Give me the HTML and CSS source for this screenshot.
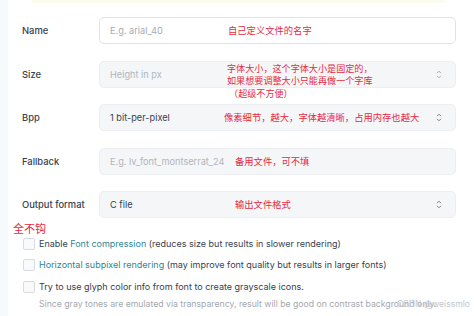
FILE: index.html
```html
<!DOCTYPE html>
<html lang="en">
<head>
    <meta charset="UTF-8">
    <meta name="viewport" content="width=device-width, initial-scale=1.0">
    <title>Font converter settings</title>
    <link rel="stylesheet" href="styles.css">
</head>
<body>

    <div class="top-strip"></div>

    <!-- Settings form -->
    <form class="form">
        <div class="row">
            <label class="label" for="name">Name</label>
            <div class="field">
                <input class="control" id="name" type="text" placeholder="E.g. arial_40">
                <span class="note note-name">自己定义文件的名字</span>
            </div>
        </div>

        <div class="row">
            <label class="label" for="size">Size</label>
            <div class="field">
                <div class="control control-grey">
                    <span class="placeholder">Height in px</span>
                    <svg class="spin" width="6" height="9" viewBox="0 0 6 9"><path d="M1 3.2 3 1.2 5 3.2M1 5.8 3 7.8 5 5.8" fill="none" stroke="#9ca3af" stroke-width="0.9"/></svg>
                </div>
                <span class="note note-size">字体大小，这个字体大小是固定的，<br>如果想要调整大小只能再做一个字库<br>&nbsp;（超级不方便）</span>
            </div>
        </div>

        <div class="row">
            <label class="label" for="bpp">Bpp</label>
            <div class="field">
                <div class="control control-grey" id="bpp">
                    <span class="value">1 bit-per-pixel</span>
                    <svg class="spin" width="6" height="9" viewBox="0 0 6 9"><path d="M1 3.2 3 1.2 5 3.2M1 5.8 3 7.8 5 5.8" fill="none" stroke="#6b7280" stroke-width="0.9"/></svg>
                </div>
                <span class="note note-bpp">像素细节，越大，字体越清晰，占用内存也越大</span>
            </div>
        </div>

        <div class="row">
            <label class="label" for="fallback">Fallback</label>
            <div class="field">
                <div class="control control-grey" id="fallback">
                    <span class="placeholder">E.g. lv_font_montserrat_24</span>
                </div>
                <span class="note note-fallback">备用文件，可不填</span>
            </div>
        </div>

        <div class="row">
            <label class="label" for="format">Output format</label>
            <div class="field">
                <div class="control control-grey" id="format">
                    <span class="value">C file</span>
                    <svg class="spin" width="6" height="9" viewBox="0 0 6 9"><path d="M1 3.2 3 1.2 5 3.2M1 5.8 3 7.8 5 5.8" fill="none" stroke="#6b7280" stroke-width="0.9"/></svg>
                </div>
                <span class="note note-format">输出文件格式</span>
            </div>
        </div>

        <!-- Options -->
        <div class="checks">
            <div class="note-all">全不钩</div>
            <label class="check">
                <span class="box"></span>
                <span>Enable <span class="link">Font compression</span> (reduces size but results in slower rendering)</span>
            </label>
            <label class="check">
                <span class="box"></span>
                <span><span class="link">Horizontal subpixel rendering</span> (may improve font quality but results in larger fonts)</span>
            </label>
            <label class="check">
                <span class="box"></span>
                <span>Try to use glyph color info from font to create grayscale icons.</span>
            </label>
            <div class="hint">Since gray tones are emulated via transparency, result will be good on contrast background only.</div>
        </div>
    </form>

    <div class="watermark">CSDN @weissmlo</div>

</body>
</html>
```

FILE: styles.css
```css
body {
    margin: 0;
    background-color: #ffffff;
    font-family: Inter, "Noto Sans", "Noto Sans CJK SC", sans-serif;
    color: #374151;
    border-left: 8px solid #f5fafb;
    height: 316px;
    box-sizing: border-box;
    overflow: hidden;
    position: relative;
}

.top-strip {
    height: 3px;
    margin: 0 29px 0 24px;
    background-color: #fbfbee;
}

/* --- Form rows --- */
.form {
    padding: 14px 0 0 14px;
}

.row {
    display: grid;
    grid-template-columns: 77px 357px;
    align-items: center;
    height: 27px;
    margin-bottom: 16.5px;
}

.label {
    font-size: 9.4px;
    font-weight: 500;
    color: #374151;
}

.field {
    position: relative;
    height: 27px;
}

.control {
    box-sizing: border-box;
    width: 100%;
    height: 27px;
    margin: 0;
    padding: 0 13px 0 10px;
    border: 1px solid #e1e3e7;
    border-radius: 5px;
    background-color: #ffffff;
    font-family: inherit;
    font-size: 9.2px;
    color: #374151;
    display: flex;
    align-items: center;
    justify-content: space-between;
    outline: none;
}
.control::placeholder { color: #a5abb5; }

.control-grey {
    background-color: #f5f6f8;
    border-color: #eceef1;
}

.placeholder { color: #b0b5bd; }
.value { color: #374151; }

.spin { flex: none; }

/* Red annotations drawn over the inputs */
.note {
    position: absolute;
    font-family: "Noto Sans CJK SC", sans-serif;
    font-size: 9.3px;
    color: #e52a3f;
    line-height: 12.5px;
    white-space: nowrap;
}
.note-name { left: 129px; top: 7px; }
.note-size { left: 128px; top: 1px; font-size: 9.1px; }
.note-bpp { left: 125px; top: 7px; }
.note-fallback { left: 136px; top: 7px; }
.note-format { left: 136px; top: 7px; }

/* --- Checkboxes --- */
.checks {
    margin: -13px 0 0 -9px;
}

.note-all {
    font-family: "Noto Sans CJK SC", sans-serif;
    font-size: 11px;
    line-height: 12px;
    color: #e52a3f;
}

.check {
    display: flex;
    align-items: center;
    gap: 4px;
    height: 22px;
    padding-left: 10px;
    font-size: 9px;
    color: #374151;
    white-space: nowrap;
}
.check:first-of-type { height: 20px; }

.box {
    flex: none;
    width: 10px;
    height: 10px;
    border: 1px solid #d8dbe0;
    border-radius: 2px;
    background-color: #f9fafb;
}

.link { color: #2f8596; }

.hint {
    padding-left: 26px;
    font-size: 8.7px;
    line-height: 12px;
    color: #a3a8b0;
    white-space: nowrap;
}

.watermark {
    position: absolute;
    right: 4px;
    bottom: 7px;
    font-size: 8.6px;
    color: #c4c7cc;
}
```
